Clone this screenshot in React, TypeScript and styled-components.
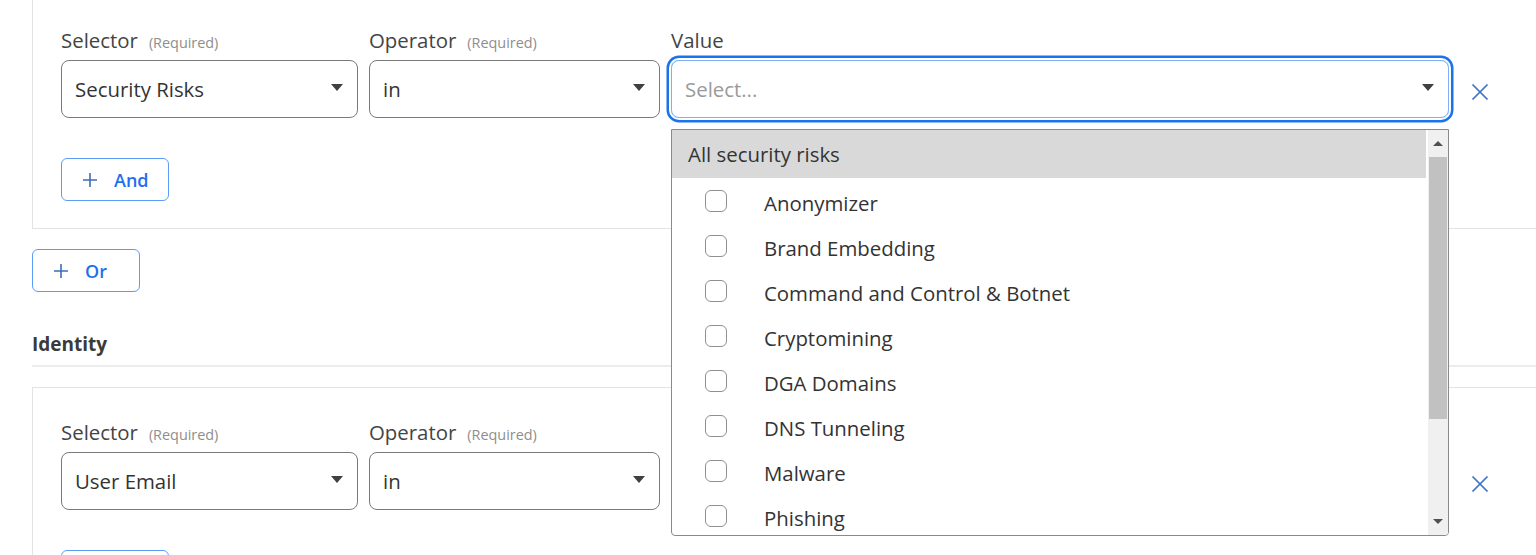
import React from 'react';
import styled, { createGlobalStyle } from 'styled-components';

const GlobalStyle = createGlobalStyle`
  html, body {
    margin: 0;
    padding: 0;
    background: #ffffff;
    overflow: hidden;
  }
  body {
    font-family: 'Open Sans', 'Noto Sans', sans-serif;
    color: #333333;
  }
`;

const FONT = 20.4;

const Page = styled.div`
  width: 1600px;
  padding-left: 32px;
  display: flex;
  flex-direction: column;
`;

const Card = styled.div<{ $first?: boolean }>`
  border: 1px solid #e3e3e3;
  border-top: ${(p) => (p.$first ? 'none' : '1px solid #e3e3e3')};
  padding: ${(p) => (p.$first ? '28px' : '32px')} 28px 27px 28px;
  display: flex;
  flex-direction: column;
  gap: 40px;
`;

const ConditionRow = styled.div`
  display: flex;
  align-items: flex-end;
  gap: 11px;
`;

const Field = styled.div<{ $width: number }>`
  width: ${(p) => p.$width}px;
  display: flex;
  flex-direction: column;
  gap: 8px;
  position: relative;
`;

const Label = styled.div`
  height: 24px;
  display: flex;
  align-items: baseline;
  gap: 11px;
  font-size: ${FONT}px;
  color: #444444;
  line-height: 24px;
  white-space: nowrap;
`;

const Hint = styled.span`
  font-size: 14.4px;
  color: #8e8e8e;
`;

const SelectBox = styled.div<{ $focused?: boolean }>`
  height: 58px;
  box-sizing: border-box;
  border: 1px solid ${(p) => (p.$focused ? '#7eb0f7' : '#7a7a7a')};
  border-radius: 8px;
  box-shadow: ${(p) =>
    p.$focused ? '0 0 0 2px #ffffff, 0 0 0 4.5px #1a73e8' : 'none'};
  display: flex;
  align-items: center;
  justify-content: space-between;
  padding: 0 14px 0 13px;
  font-size: ${FONT}px;
  color: #333333;
`;

const Placeholder = styled.span`
  color: #9a9a9a;
`;

const Caret = styled.span`
  width: 0;
  height: 0;
  border-left: 6px solid transparent;
  border-right: 6px solid transparent;
  border-top: 7px solid #404040;
  margin-bottom: 4px;
`;

const CaretUp = styled.span`
  width: 0;
  height: 0;
  border-left: 5px solid transparent;
  border-right: 5px solid transparent;
  border-bottom: 5px solid #505050;
`;

const CaretDown = styled.span`
  width: 0;
  height: 0;
  border-left: 5px solid transparent;
  border-right: 5px solid transparent;
  border-top: 5px solid #505050;
`;

const RemoveButton = styled.button`
  width: 40px;
  height: 58px;
  border: none;
  background: none;
  padding: 5px 0 0 0;
  display: flex;
  align-items: center;
  justify-content: center;
  cursor: pointer;
`;

const AddButton = styled.button<{ $width: number }>`
  width: ${(p) => p.$width}px;
  height: 43px;
  box-sizing: border-box;
  border: 1px solid #5c9cf6;
  border-radius: 6px;
  background: #ffffff;
  display: flex;
  align-items: center;
  gap: 16px;
  padding: 0 0 0 20px;
  font-family: inherit;
  font-size: 18px;
  font-weight: 600;
  color: #1f6ff0;
  cursor: pointer;
`;

const OrButton = styled(AddButton)`
  margin-top: 20px;
`;

const SectionTitle = styled.h3`
  margin: 38px 0 0 0;
  padding-bottom: 7px;
  border-bottom: 2px solid #ececec;
  font-size: 19px;
  font-weight: 700;
  color: #3a3a3a;
  line-height: 28px;
`;

const SecondCard = styled(Card)`
  margin-top: 20px;
`;

const Menu = styled.div`
  position: absolute;
  top: 100%;
  left: 0;
  right: 0;
  margin-top: 11px;
  height: 407px;
  box-sizing: border-box;
  border: 1px solid #8a8a8a;
  border-radius: 0 0 4px 4px;
  background: #ffffff;
  display: flex;
  overflow: hidden;
  z-index: 10;
`;

const MenuList = styled.div`
  flex: 1;
  overflow: hidden;
`;

const MenuHeader = styled.div`
  height: 48px;
  background: #d9d9d9;
  display: flex;
  align-items: center;
  padding-left: 16px;
  font-size: ${FONT}px;
  color: #333333;
  margin-bottom: 2px;
`;

const Option = styled.label`
  height: 45px;
  display: flex;
  align-items: center;
  padding-left: 33px;
  font-size: ${FONT}px;
  color: #333333;
  white-space: nowrap;
`;

const Check = styled.span`
  width: 20px;
  height: 20px;
  border: 1px solid #8f8f8f;
  border-radius: 6px;
  margin-right: 37px;
  margin-bottom: 4px;
  flex-shrink: 0;
`;

const Scrollbar = styled.div`
  width: 20px;
  margin-left: 2px;
  background: #f0f0f0;
  display: flex;
  flex-direction: column;
  align-items: center;
`;

const ScrollArrow = styled.div`
  height: 27px;
  width: 100%;
  display: flex;
  align-items: center;
  justify-content: center;
`;

const ScrollTrack = styled.div`
  flex: 1;
  width: 100%;
  padding: 0 1px;
  box-sizing: border-box;
`;

const ScrollThumb = styled.div`
  height: 262px;
  background: #c1c1c1;
`;

const CloseIcon = () => (
  <svg width="18" height="18" viewBox="0 0 18 18">
    <path d="M1.5 1.5 L16.5 16.5 M16.5 1.5 L1.5 16.5" stroke="#3a72c8" strokeWidth="1.7" fill="none" />
  </svg>
);

const PlusIcon = () => (
  <svg width="16" height="16" viewBox="0 0 16 16">
    <path d="M8 1 V15 M1 8 H15" stroke="#3d6db8" strokeWidth="1.6" fill="none" />
  </svg>
);

const risks = [
  'Anonymizer',
  'Brand Embedding',
  'Command and Control & Botnet',
  'Cryptomining',
  'DGA Domains',
  'DNS Tunneling',
  'Malware',
  'Phishing',
  'Private IP Address',
  'Spam',
  'Spyware',
];

type ConditionProps = {
  selector: string;
  open?: boolean;
};

const Condition: React.FC<ConditionProps> = ({ selector, open = false }) => (
  <ConditionRow>
    <Field $width={297}>
      <Label>
        Selector <Hint>(Required)</Hint>
      </Label>
      <SelectBox>
        {selector}
        <Caret />
      </SelectBox>
    </Field>
    <Field $width={291}>
      <Label>
        Operator <Hint>(Required)</Hint>
      </Label>
      <SelectBox>
        in
        <Caret />
      </SelectBox>
    </Field>
    <Field $width={778}>
      <Label>{open ? 'Value' : ''}</Label>
      <SelectBox $focused={open} style={open ? undefined : { visibility: 'hidden' }}>
        <Placeholder>Select...</Placeholder>
        <Caret />
      </SelectBox>
      {open && (
        <Menu>
          <MenuList>
            <MenuHeader>All security risks</MenuHeader>
            {risks.map((r) => (
              <Option key={r}>
                <Check />
                {r}
              </Option>
            ))}
          </MenuList>
          <Scrollbar>
            <ScrollArrow>
              <CaretUp />
            </ScrollArrow>
            <ScrollTrack>
              <ScrollThumb />
            </ScrollTrack>
            <ScrollArrow>
              <CaretDown />
            </ScrollArrow>
          </Scrollbar>
        </Menu>
      )}
    </Field>
    <RemoveButton aria-label="Remove">
      <CloseIcon />
    </RemoveButton>
  </ConditionRow>
);

const App: React.FC = () => (
  <>
    <GlobalStyle />
    <Page>
      <Card $first>
        <Condition selector="Security Risks" open />
        <AddButton $width={108}>
          <PlusIcon />
          And
        </AddButton>
      </Card>
      <OrButton $width={108}>
        <PlusIcon />
        Or
      </OrButton>
      <SectionTitle>Identity</SectionTitle>
      <SecondCard>
        <Condition selector="User Email" />
        <AddButton $width={108}>
          <PlusIcon />
          And
        </AddButton>
      </SecondCard>
    </Page>
  </>
);

export default App;
